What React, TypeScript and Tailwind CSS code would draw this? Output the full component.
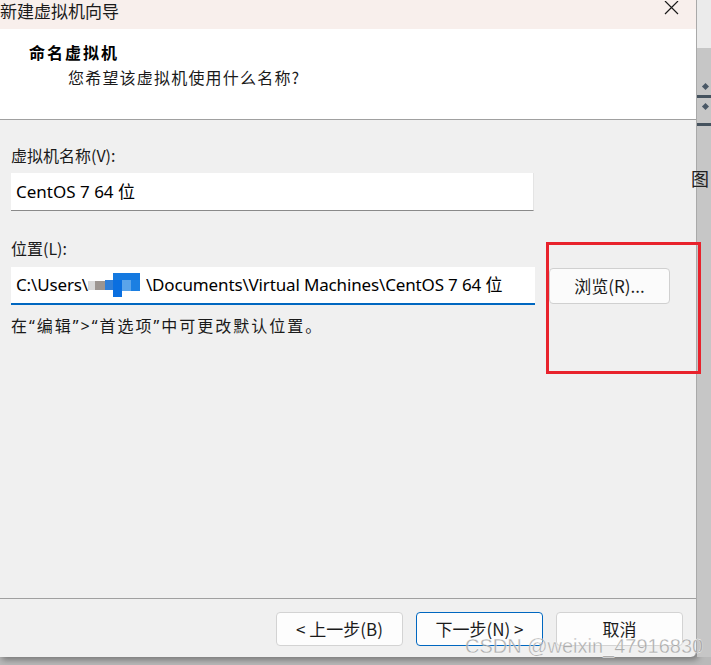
import React from 'react';

const cjk = { fontFamily: '"Noto Sans CJK SC", "Noto Sans", sans-serif' };
const latin = { fontFamily: '"Noto Sans", "Noto Sans CJK SC", sans-serif' };

const WizardButton: React.FC<{ label: string; primary?: boolean }> = ({ label, primary }) => (
    <button
        className={`w-[127px] h-[34px] rounded-[4px] bg-[#fdfdfd] text-[17px] text-[#1b1b1b] flex items-center justify-center ${
            primary ? 'border border-[#0067c0]' : 'border border-[#d3d3d3]'
        }`}
        style={cjk}
    >
        {label}
    </button>
);

const App: React.FC = () => {
    return (
        <div className="relative w-[711px] h-[665px] overflow-hidden bg-[#b9b9b9] flex">
            {/* wizard window */}
            <div className="w-[697px] h-[657px] flex flex-col bg-[#f0f0f0] border-r border-[#a9a9a9] rounded-br-[6px] shadow-[2px_3px_6px_rgba(0,0,0,0.35)] shrink-0">
                <div className="h-[29px] bg-[#f8efec] flex items-start justify-between shrink-0">
                    <span className="text-[17px] leading-[22px] text-[#1a1a1a]" style={cjk}>
                        新建虚拟机向导
                    </span>
                    <svg className="mr-[17px] mt-[1px]" width="15" height="14" viewBox="0 0 15 14">
                        <path d="M1 0 L14 13 M14 0 L1 13" stroke="#1a1a1a" strokeWidth="1.2" fill="none" />
                    </svg>
                </div>

                <div className="h-[90px] bg-white shrink-0 pt-[13px]">
                    <div className="pl-[29px] text-[16px] leading-[20px] font-bold tracking-[2px] text-black" style={cjk}>
                        命名虚拟机
                    </div>
                    <div className="pl-[68px] mt-[5px] text-[16px] leading-[20px] tracking-[1.2px] text-[#1a1a1a]" style={cjk}>
                        您希望该虚拟机使用什么名称?
                    </div>
                </div>
                <div className="h-px bg-[#a0a0a0] shrink-0" />

                <div className="flex-1 pl-[11px] pt-[25px]">
                    <div className="text-[16px] leading-[20px] text-[#1a1a1a]" style={cjk}>
                        虚拟机名称(V):
                    </div>
                    <div
                        className="mt-[8px] w-[523px] h-[38px] bg-white border-b border-[#8a8a8a] border-r border-r-[#e4e4e4] pl-[5px] flex items-center text-[17px] text-black"
                        style={latin}
                    >
                        CentOS 7 64 位
                    </div>

                    <div className="mt-[27px] text-[16px] leading-[20px] text-[#1a1a1a]" style={cjk}>
                        位置(L):
                    </div>
                    <div className="mt-[9px] flex items-start gap-[14px]">
                        <div
                            className="w-[524px] h-[38px] bg-white border-b-2 border-[#0067c0] pl-[5px] flex items-center text-[17px] tracking-[-0.15px] text-black whitespace-nowrap"
                            style={latin}
                        >
                            <span>C:\Users\</span>
                            <span className="flex items-center w-[58px] h-[24px]">
                                <span className="w-[7px] h-[9px] bg-[#d8d8d8]" />
                                <span className="w-[10px] h-[9px] bg-[#9c9590]" />
                                <span className="w-[8px] h-[10px] bg-[#2f7fd8]" />
                                <span className="flex flex-col self-start">
                                    <span className="w-[27px] h-[7px] bg-[#1479e0]" />
                                    <span className="flex">
                                        <span className="w-[9px] h-[17px] bg-[#0a6fe0]" />
                                        <span className="w-[9px] h-[11px] bg-[#5aa4ea]" />
                                        <span className="w-[9px] h-[11px] bg-[#1b7fe2]" />
                                    </span>
                                </span>
                            </span>
                            <span>\Documents\Virtual Machines\CentOS 7 64 位</span>
                        </div>
                        <button
                            className="mt-px w-[121px] h-[36px] rounded-[4px] bg-[#fbfbfb] border border-[#d0d0d0] text-[17px] text-[#1b1b1b] flex items-center justify-center"
                            style={cjk}
                        >
                            浏览(R)...
                        </button>
                    </div>

                    <div className="mt-[11px] text-[16px] leading-[20px] tracking-[2px] text-[#1a1a1a]" style={latin}>
                        在“编辑”&gt;“首选项”中可更改默认位置。
                    </div>
                </div>

                <div className="h-px bg-[#a0a0a0] shrink-0" />
                <div className="h-[58px] shrink-0 flex justify-end items-start gap-[13px] pr-[13px] pt-[13px]">
                    <WizardButton label="< 上一步(B)" />
                    <WizardButton label="下一步(N) >" primary />
                    <WizardButton label="取消" />
                </div>
            </div>

            {/* background app peeking at the right */}
            <div className="flex-1 h-[657px] flex flex-col">
                <div className="h-[48px] bg-[#ebebeb]" />
                <div className="flex-1 bg-[#c6c6c6] flex flex-col">
                    <div className="mt-[36px] ml-[6px] w-[5px] h-[5px] rotate-45 bg-[#4a5866]" />
                    <div className="mt-[6px] h-[3px] bg-[#45525e]" />
                    <div className="mt-[6px] ml-[6px] w-[5px] h-[5px] rotate-45 bg-[#4a5866]" />
                    <div className="mt-[14px] h-[3px] bg-[#45525e]" />
                    <div className="mt-[42px] -ml-[6px] text-[18px] leading-[20px] text-[#222]" style={cjk}>
                        图
                    </div>
                </div>
            </div>

            {/* annotation */}
            <div className="absolute left-[546px] top-[242px] w-[155px] h-[132px] border-[3px] border-[#e8222c]" />

            {/* watermark */}
            <div
                className="absolute left-[465px] top-[634px] text-[20px] leading-[24px] text-[#9a9a9a]/80 whitespace-nowrap"
                style={{ fontFamily: '"Liberation Sans", Arial, sans-serif', WebkitTextStroke: '0.3px #ffffff' }}
            >
                CSDN @weixin_47916830
            </div>
        </div>
    );
};

export default App;
